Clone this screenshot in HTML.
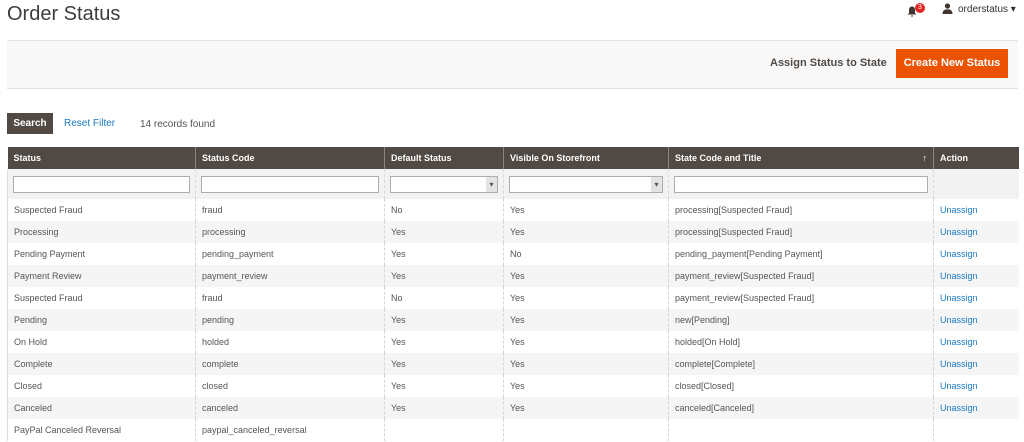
<!DOCTYPE html><html><head><style>
body{margin:0;width:1024px;height:442px;overflow:hidden;background:#fff;font-family:"Liberation Sans",sans-serif;color:#303030}
.t{position:absolute;left:7px;top:3px;font-size:20px;color:#3d3d3d}
.bar{position:absolute;left:7px;top:40px;width:1011px;height:47px;background:#f8f8f8;border-top:1px solid #e3e3e3;border-bottom:1px solid #e3e3e3}
.assign{position:absolute;left:770px;top:57px;font-size:11px;font-weight:bold;color:#514943}
.create{position:absolute;left:896px;top:49px;width:112px;height:29px;background:#eb5202;color:#fff;font-size:11px;font-weight:bold;text-align:center;line-height:29px}
.search{position:absolute;left:7px;top:113px;width:46px;height:21px;background:#514943;color:#fff;font-size:10px;font-weight:bold;text-align:center;line-height:21px}
.reset{position:absolute;left:64px;top:118px;font-size:10px;color:#1979c3}
.rec{position:absolute;left:140px;top:119px;font-size:10px;color:#555}
table{position:absolute;left:7px;top:147px;width:1011px;border-collapse:collapse;font-size:9px;table-layout:fixed}
th{background:#514943;color:#fff;text-align:left;height:22px;padding:0 6px;font-size:9px;border-left:1px solid #8a837f}
th:first-child{border-left:none}
td{height:22px;padding:0 6px;border-left:1px dashed #d6d6d6;color:#555}
td:first-child{border-left:1px solid #ddd}
tr.f td{height:30px;background:#f2f2f2;padding:0 5px}
tr.g td{background:#f5f5f5}
.in{height:15px;border:1px solid #adadad;background:#fff;position:relative}
.in.s:after{content:"▾";position:absolute;right:0;top:0;width:11px;height:15px;background:#e3e3e3;font-size:8px;text-align:center;line-height:15px;color:#555}
a{color:#1979c3;text-decoration:none}
</style></head><body>
<div class="t">Order Status</div>
<svg style="position:absolute;left:907px;top:6px" width="10" height="11" viewBox="0 0 10 11"><path d="M5 0.5C3 0.5 2 2 2 4V7L0.5 8.5H9.5L8 7V4C8 2 7 0.5 5 0.5Z M4 9.5H6V10.5H4Z" fill="#41362f"/></svg>
<div style="position:absolute;left:915px;top:3px;width:10px;height:10px;border-radius:5px;background:#e22626;color:#fff;font-size:7px;text-align:center;line-height:10px">3</div>
<svg style="position:absolute;left:942px;top:3px" width="11" height="11" viewBox="0 0 11 11"><circle cx="5.5" cy="3" r="2.6" fill="#41362f"/><path d="M0.5 11C0.5 7.5 2.5 6.2 5.5 6.2S10.5 7.5 10.5 11Z" fill="#41362f"/></svg>
<div style="position:absolute;left:958px;top:4px;font-size:10px;color:#303030">orderstatus ▾</div>
<div class="bar"></div>
<div class="assign">Assign Status to State</div>
<div class="create">Create New Status</div>
<div class="search">Search</div>
<div class="reset">Reset Filter</div>
<div class="rec">14 records found</div>
<table>
<colgroup><col style="width:188px"><col style="width:189px"><col style="width:119px"><col style="width:165px"><col style="width:265px"><col style="width:85px"></colgroup>
<tr><th>Status</th><th>Status Code</th><th>Default Status</th><th>Visible On Storefront</th><th>State Code and Title<span style="float:right">↑</span></th><th>Action</th></tr>
<tr class="f"><td><div class="in"></div></td><td><div class="in"></div></td><td><div class="in s"></div></td><td><div class="in s"></div></td><td><div class="in"></div></td><td></td></tr>
<tr><td>Suspected Fraud</td><td>fraud</td><td>No</td><td>Yes</td><td>processing[Suspected Fraud]</td><td><a>Unassign</a></td></tr>
<tr class="g"><td>Processing</td><td>processing</td><td>Yes</td><td>Yes</td><td>processing[Suspected Fraud]</td><td><a>Unassign</a></td></tr>
<tr><td>Pending Payment</td><td>pending_payment</td><td>Yes</td><td>No</td><td>pending_payment[Pending Payment]</td><td><a>Unassign</a></td></tr>
<tr class="g"><td>Payment Review</td><td>payment_review</td><td>Yes</td><td>Yes</td><td>payment_review[Suspected Fraud]</td><td><a>Unassign</a></td></tr>
<tr><td>Suspected Fraud</td><td>fraud</td><td>No</td><td>Yes</td><td>payment_review[Suspected Fraud]</td><td><a>Unassign</a></td></tr>
<tr class="g"><td>Pending</td><td>pending</td><td>Yes</td><td>Yes</td><td>new[Pending]</td><td><a>Unassign</a></td></tr>
<tr><td>On Hold</td><td>holded</td><td>Yes</td><td>Yes</td><td>holded[On Hold]</td><td><a>Unassign</a></td></tr>
<tr class="g"><td>Complete</td><td>complete</td><td>Yes</td><td>Yes</td><td>complete[Complete]</td><td><a>Unassign</a></td></tr>
<tr><td>Closed</td><td>closed</td><td>Yes</td><td>Yes</td><td>closed[Closed]</td><td><a>Unassign</a></td></tr>
<tr class="g"><td>Canceled</td><td>canceled</td><td>Yes</td><td>Yes</td><td>canceled[Canceled]</td><td><a>Unassign</a></td></tr>
<tr><td>PayPal Canceled Reversal</td><td>paypal_canceled_reversal</td><td></td><td></td><td></td><td></td></tr>
</table>
</body></html>
